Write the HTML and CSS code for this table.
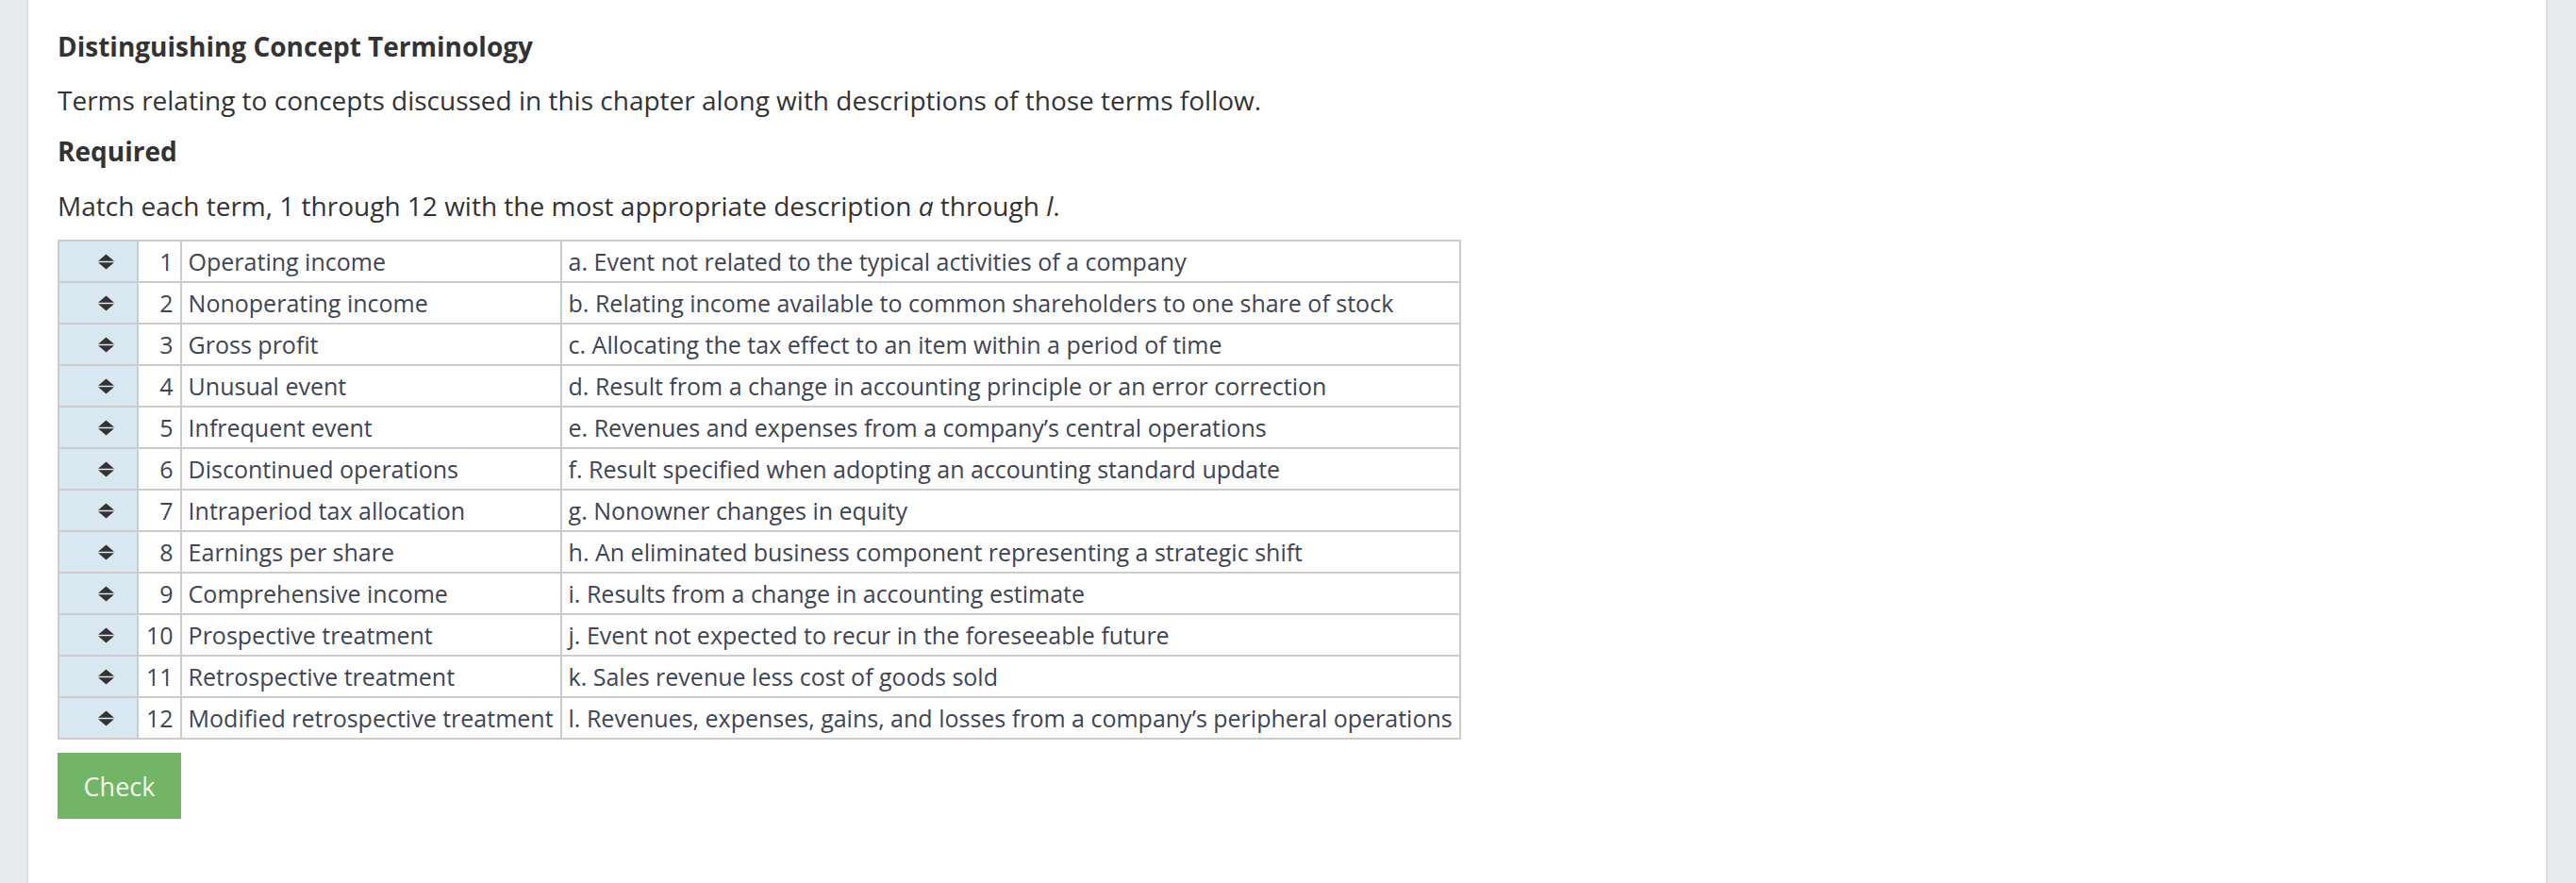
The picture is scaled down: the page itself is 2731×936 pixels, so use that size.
FILE: index.html
```html
<!DOCTYPE html>
<html>
<head>
<meta charset="utf-8">
<link rel="stylesheet" href="styles.css">
</head>
<body>
<div class="panel">
  <h1 class="title">Distinguishing Concept Terminology</h1>
  <p class="para intro">Terms relating to concepts discussed in this chapter along with descriptions of those terms follow.</p>
  <h2 class="req">Required</h2>
  <p class="para task">Match each term, 1 through 12 with the most appropriate description <i>a</i> through <i>l</i>.</p>
  <table class="match">
    <tbody>
      <tr><td class="handle"><svg class="sort" viewBox="0 0 16 16"><path d="M8 0.5 L16 7.3 H0 Z M0 8.7 H16 L8 15.5 Z"/></svg></td><td class="num">1</td><td class="term">Operating income</td><td class="desc">a. Event not related to the typical activities of a company</td></tr>
      <tr><td class="handle"><svg class="sort" viewBox="0 0 16 16"><path d="M8 0.5 L16 7.3 H0 Z M0 8.7 H16 L8 15.5 Z"/></svg></td><td class="num">2</td><td class="term">Nonoperating income</td><td class="desc">b. Relating income available to common shareholders to one share of stock</td></tr>
      <tr><td class="handle"><svg class="sort" viewBox="0 0 16 16"><path d="M8 0.5 L16 7.3 H0 Z M0 8.7 H16 L8 15.5 Z"/></svg></td><td class="num">3</td><td class="term">Gross profit</td><td class="desc">c. Allocating the tax effect to an item within a period of time</td></tr>
      <tr><td class="handle"><svg class="sort" viewBox="0 0 16 16"><path d="M8 0.5 L16 7.3 H0 Z M0 8.7 H16 L8 15.5 Z"/></svg></td><td class="num">4</td><td class="term">Unusual event</td><td class="desc">d. Result from a change in accounting principle or an error correction</td></tr>
      <tr><td class="handle"><svg class="sort" viewBox="0 0 16 16"><path d="M8 0.5 L16 7.3 H0 Z M0 8.7 H16 L8 15.5 Z"/></svg></td><td class="num">5</td><td class="term">Infrequent event</td><td class="desc">e. Revenues and expenses from a company’s central operations</td></tr>
      <tr><td class="handle"><svg class="sort" viewBox="0 0 16 16"><path d="M8 0.5 L16 7.3 H0 Z M0 8.7 H16 L8 15.5 Z"/></svg></td><td class="num">6</td><td class="term">Discontinued operations</td><td class="desc">f. Result specified when adopting an accounting standard update</td></tr>
      <tr><td class="handle"><svg class="sort" viewBox="0 0 16 16"><path d="M8 0.5 L16 7.3 H0 Z M0 8.7 H16 L8 15.5 Z"/></svg></td><td class="num">7</td><td class="term">Intraperiod tax allocation</td><td class="desc">g. Nonowner changes in equity</td></tr>
      <tr><td class="handle"><svg class="sort" viewBox="0 0 16 16"><path d="M8 0.5 L16 7.3 H0 Z M0 8.7 H16 L8 15.5 Z"/></svg></td><td class="num">8</td><td class="term">Earnings per share</td><td class="desc">h. An eliminated business component representing a strategic shift</td></tr>
      <tr><td class="handle"><svg class="sort" viewBox="0 0 16 16"><path d="M8 0.5 L16 7.3 H0 Z M0 8.7 H16 L8 15.5 Z"/></svg></td><td class="num">9</td><td class="term">Comprehensive income</td><td class="desc">i. Results from a change in accounting estimate</td></tr>
      <tr><td class="handle"><svg class="sort" viewBox="0 0 16 16"><path d="M8 0.5 L16 7.3 H0 Z M0 8.7 H16 L8 15.5 Z"/></svg></td><td class="num">10</td><td class="term">Prospective treatment</td><td class="desc">j. Event not expected to recur in the foreseeable future</td></tr>
      <tr><td class="handle"><svg class="sort" viewBox="0 0 16 16"><path d="M8 0.5 L16 7.3 H0 Z M0 8.7 H16 L8 15.5 Z"/></svg></td><td class="num">11</td><td class="term">Retrospective treatment</td><td class="desc">k. Sales revenue less cost of goods sold</td></tr>
      <tr><td class="handle"><svg class="sort" viewBox="0 0 16 16"><path d="M8 0.5 L16 7.3 H0 Z M0 8.7 H16 L8 15.5 Z"/></svg></td><td class="num">12</td><td class="term">Modified retrospective treatment</td><td class="desc">l. Revenues, expenses, gains, and losses from a company’s peripheral operations</td></tr>
    </tbody>
  </table>
  <button class="check">Check</button>
</div>
</body>
</html>
```

FILE: styles.css
```css
html, body {
  margin: 0;
  padding: 0;
}
body {
  background: #e9eaed;
  display: flex;
  min-height: 936px;
  padding: 0 30px 0 28px;
  box-sizing: border-box;
  font-family: "Open Sans", "Noto Sans", sans-serif;
  color: #333;
}
.panel {
  flex: 1;
  background: #fff;
  border-left: 2px solid #dfe0e3;
  border-right: 2px solid #dcdde0;
  padding: 30px 32px 0 31px;
}
.title {
  font-size: 28px;
  font-weight: 700;
  margin: 0 0 19px 0;
  line-height: 38px;
}
.para {
  font-size: 28px;
  margin: 0;
  line-height: 38px;
}
.intro {
  margin-bottom: 16px;
}
.task {
  margin-bottom: 17px;
}
.req {
  font-size: 28px;
  font-weight: 700;
  margin: 0 0 20px 0;
  line-height: 38px;
}
.match {
  border-collapse: collapse;
  border: 2px solid #ccc;
  color: #3e4555;
  font-size: 25px;
}
.match td {
  border: 2px solid #ccc;
  height: 42px;
  padding: 0 7px;
  white-space: nowrap;
  line-height: 32px;
}
.match td.handle {
  background: #d9e8f0;
  width: 17px;
  padding: 0 24px 0 41px;
}
.sort {
  width: 17px;
  height: 17px;
  fill: #333;
  display: block;
}
.match td.num {
  text-align: right;
  padding: 0 7px 0 8px;
}
.match td.desc {
  padding: 0 7px 0 7px;
}
.check {
  display: block;
  margin-top: 14px;
  background: #72b566;
  border: none;
  color: #f3faf0;
  font-family: "Open Sans", "Noto Sans", sans-serif;
  font-size: 27px;
  width: 131px;
  height: 70px;
  padding: 0;
}
```
